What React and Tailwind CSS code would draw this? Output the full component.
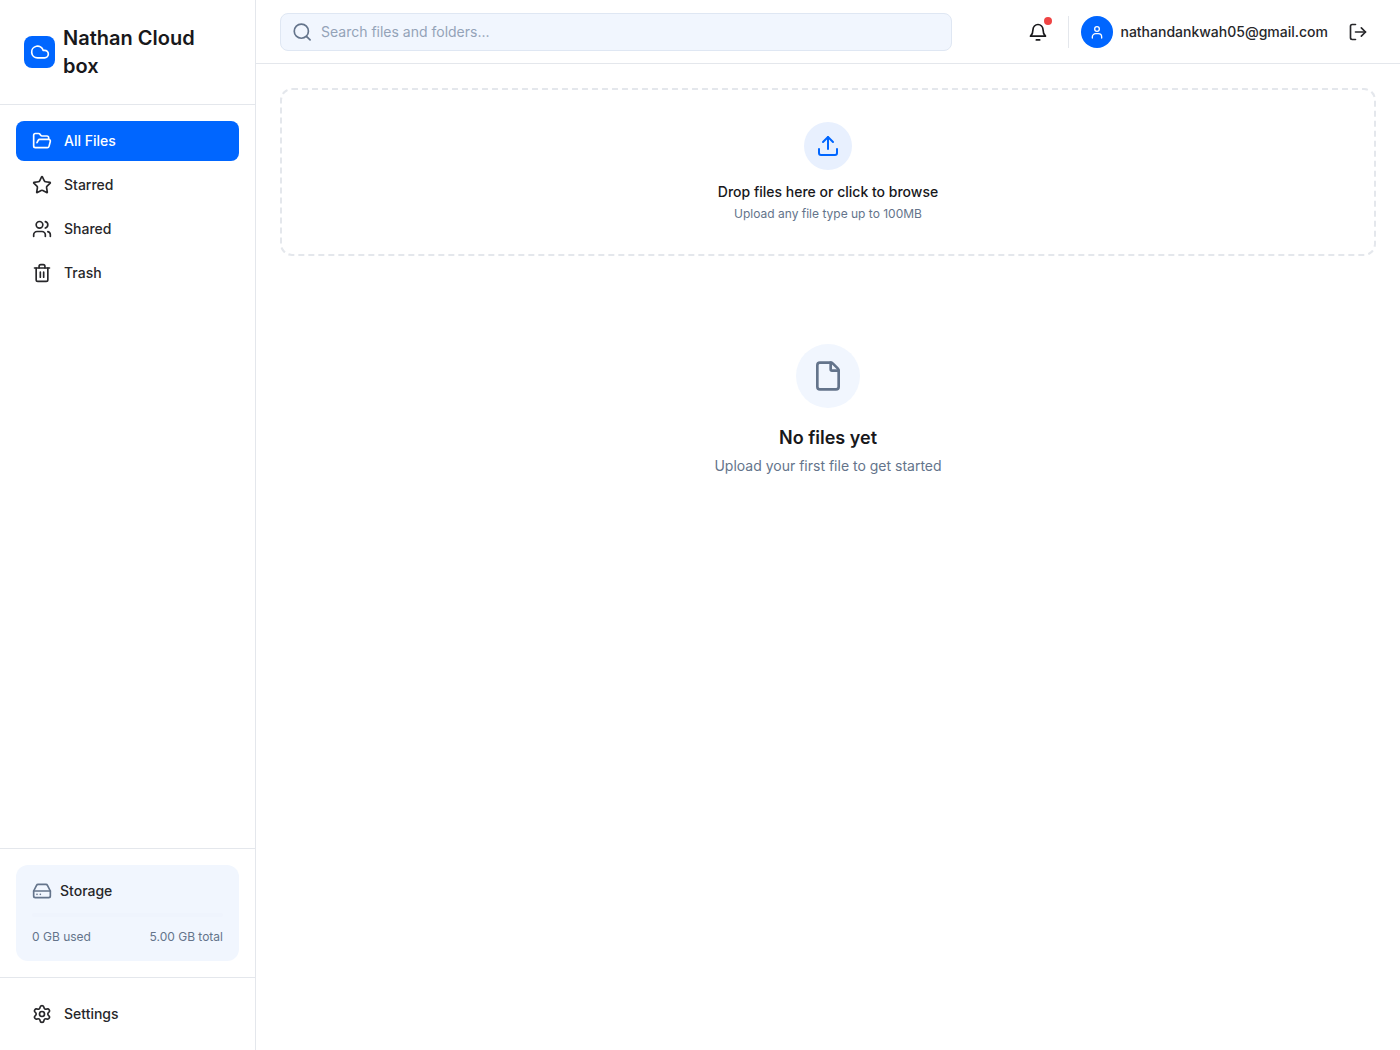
import { Cloud, File, FolderOpen, HardDrive, Settings, Star, Upload, Users } from "lucide-react";

const NAV_ITEMS = [
  { label: "All Files", icon: FolderOpen, active: true },
  { label: "Starred", icon: Star },
  { label: "Shared", icon: Users },
  { label: "Trash", icon: TrashIcon },
];

function SearchIcon({ className }) {
  return (
    <svg className={className} viewBox="0 0 24 24" fill="none" stroke="currentColor" strokeWidth="2" strokeLinecap="round">
      <circle cx="10" cy="11" r="8.5" />
      <path d="M16.5 17.5 20.5 21.5" />
    </svg>
  );
}

function TrashIcon({ className }) {
  return (
    <svg className={className} viewBox="0 0 24 24" fill="none" stroke="currentColor" strokeWidth="2" strokeLinecap="round" strokeLinejoin="round">
      <path d="M3 6h18" />
      <path d="M8.5 6V4a2 2 0 0 1 2-2h3a2 2 0 0 1 2 2v2" />
      <path d="M5 6v14a2 2 0 0 0 2 2h10a2 2 0 0 0 2-2V6" />
      <path d="M10 11v6M14 11v6" />
    </svg>
  );
}

function BellIcon({ className }) {
  return (
    <svg className={className} viewBox="0 0 24 24" fill="none" stroke="currentColor" strokeWidth="2" strokeLinecap="round" strokeLinejoin="round">
      <path d="M6 9a6 6 0 1 1 12 0c0 4 1 6 3 8H3c2-2 3-4 3-8z" />
      <path d="M10 21.5h4" />
    </svg>
  );
}

function UserIcon({ className }) {
  return (
    <svg className={className} viewBox="0 0 24 24" fill="none" stroke="currentColor" strokeWidth="2" strokeLinecap="round">
      <circle cx="12" cy="7.5" r="3.5" />
      <path d="M5 21v-1.5a5 5 0 0 1 5-5h4a5 5 0 0 1 5 5V21" />
    </svg>
  );
}

function LogoutIcon({ className }) {
  return (
    <svg className={className} viewBox="0 0 24 24" fill="none" stroke="currentColor" strokeWidth="2" strokeLinecap="round" strokeLinejoin="round">
      <path d="M9 3H5a2 2 0 0 0-2 2v14a2 2 0 0 0 2 2h4" />
      <path d="M9 12h12" />
      <path d="M16 7l5 5-5 5" />
    </svg>
  );
}

function NavItem({ label, icon: Icon, active }) {
  return (
    <a
      className={
        active
          ? "flex h-10 items-center gap-3 rounded-lg bg-[#0066ff] px-4 text-sm font-medium text-white"
          : "flex h-10 items-center gap-3 rounded-lg px-4 text-sm font-medium text-[#27272a]"
      }
    >
      <Icon className="h-5 w-5 shrink-0" strokeWidth={2} />
      <span>{label}</span>
    </a>
  );
}

function Sidebar() {
  return (
    <aside className="flex h-full w-64 shrink-0 flex-col border-r border-[#e4e7ec]">
      <div className="flex h-[105px] items-center gap-2 border-b border-[#e4e7ec] px-6">
        <div className="flex h-8 w-[31px] shrink-0 items-center justify-center rounded-lg bg-[#0066ff]">
          <Cloud className="h-5 w-5 text-white" strokeWidth={2} />
        </div>
        <h1 className="text-xl leading-7 font-semibold text-[#18181b]">Nathan Cloud box</h1>
      </div>
      <nav className="flex flex-1 flex-col gap-1 p-4">
        {NAV_ITEMS.map((item) => (
          <NavItem key={item.label} {...item} />
        ))}
      </nav>
      <div className="border-t border-[#e4e7ec] p-4">
        <div className="rounded-xl bg-[#f1f6fe] p-4">
          <div className="flex items-center gap-2">
            <HardDrive className="h-5 w-5 text-[#64748b]" strokeWidth={2} />
            <span className="text-sm font-medium text-[#27272a]">Storage</span>
          </div>
          <div className="mt-3 h-1 rounded-full bg-[#eff4fd]" />
          <div className="mt-3 flex justify-between text-xs leading-4 text-[#64748b]">
            <span>0 GB used</span>
            <span>5.00 GB total</span>
          </div>
        </div>
      </div>
      <div className="border-t border-[#e4e7ec] p-4">
        <NavItem label="Settings" icon={Settings} />
      </div>
    </aside>
  );
}

function Header() {
  return (
    <header className="flex h-16 shrink-0 items-center justify-between border-b border-[#e4e7ec] px-6">
      <div className="flex h-[38px] w-[672px] items-center gap-2 rounded-lg border border-[#dfe7f3] bg-[#f1f6fe] px-3">
        <SearchIcon className="h-5 w-5 text-[#64748b]" />
        <span className="text-sm text-[#94a3b8]">Search files and folders...</span>
      </div>
      <div className="flex items-center">
        <div className="relative mr-5">
          <BellIcon className="h-5 w-5 text-[#18181b]" />
          <span className="absolute -top-[5px] -right-1 h-2 w-2 rounded-full bg-[#ef4444]" />
        </div>
        <div className="mr-3 h-8 w-px bg-[#e4e7ec]" />
        <div className="mr-[7px] flex h-8 w-8 items-center justify-center rounded-full bg-[#0066ff]">
          <UserIcon className="h-4 w-4 text-white" />
        </div>
        <span className="mr-5 text-sm font-medium text-[#27272a]">nathandankwah05@gmail.com</span>
        <LogoutIcon className="mr-2 h-5 w-5 text-[#27272a]" />
      </div>
    </header>
  );
}

export default function App() {
  return (
    <div className="flex h-[1050px] bg-white font-['Inter',sans-serif]">
      <Sidebar />
      <main className="flex min-w-0 flex-1 flex-col">
        <Header />
        <div className="p-6">
          <div className="flex h-[168px] flex-col items-center justify-center rounded-xl border-2 border-dashed border-[#e4e7ec]">
            <div className="flex h-12 w-12 items-center justify-center rounded-full bg-[#e8f0fe]">
              <Upload className="h-6 w-6 text-[#0066ff]" strokeWidth={2} />
            </div>
            <p className="mt-3 text-sm font-medium text-[#18181b]">Drop files here or click to browse</p>
            <p className="mt-1 text-xs text-[#64748b]">Upload any file type up to 100MB</p>
          </div>
          <div className="mt-[88px] flex flex-col items-center">
            <div className="flex h-16 w-16 items-center justify-center rounded-full bg-[#f1f6fe]">
              <File className="h-8 w-8 text-[#64748b]" strokeWidth={2} />
            </div>
            <h2 className="mt-4 text-lg font-semibold text-[#18181b]">No files yet</h2>
            <p className="mt-1 text-sm text-[#64748b]">Upload your first file to get started</p>
          </div>
        </div>
      </main>
    </div>
  );
}
